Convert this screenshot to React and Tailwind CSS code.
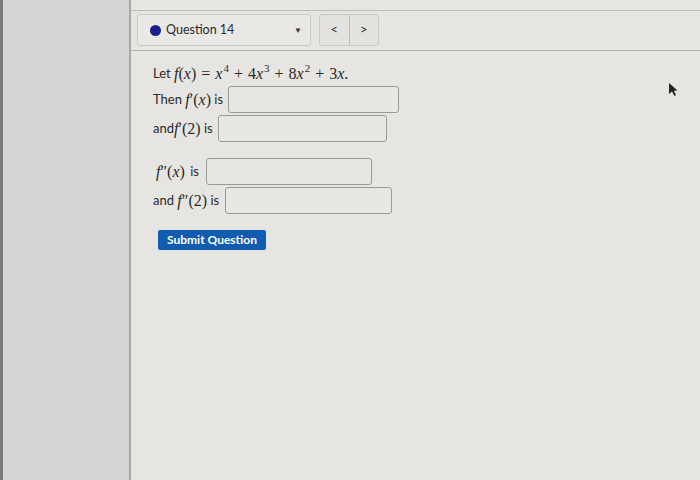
import React from "react";

const SERIF = '"Liberation Serif", "DejaVu Serif", serif';
const M = ({ children }) => (
  <span className="text-[16px] italic" style={{ fontFamily: SERIF, fontStyle: "italic" }}>{children}</span>
);
const R = ({ children }) => (
  <span className="text-[16px]" style={{ fontFamily: SERIF }}>{children}</span>
);
const Op = ({ children }) => (
  <span className="mx-[5px] text-[16px]" style={{ fontFamily: SERIF }}>{children}</span>
);
const Sup = ({ children }) => (
  <span className="relative -top-[6px] ml-[1px] text-[11px]" style={{ fontFamily: SERIF }}>{children}</span>
);

export default function App() {
  return (
    <div className="relative flex h-[480px] w-[700px] overflow-hidden bg-[#e6e5e2] text-[#2d3b45]" style={{ fontFamily: 'Lato, "Open Sans", sans-serif' }}>
      <div className="flex h-full w-[131px] shrink-0">
        <div className="w-[3px] bg-[#7a7a7a]" />
        <div className="flex-1 bg-[#d5d4d5]" />
        <div className="w-[2px] bg-[#a9a9a8]" />
      </div>
      <div className="flex flex-1 flex-col pt-[10px]">
        <div className="border-t border-[#bdbdbb]" />
        <div className="flex items-center gap-2 px-[6px] pt-[3px] pb-[4px]">
          <div className="flex h-[32px] w-[174px] items-center rounded-[3px] border border-[#c9c9c7] bg-[#e9e8e5] pl-[12px] pr-[8px]">
            <span className="mr-[5px] h-[11px] w-[11px] rounded-full bg-[#1a1f8c]" />
            <span className="text-[12.5px] text-[#2a2a2a]">Question 14</span>
            <span className="ml-auto text-[8px] text-[#333]">▼</span>
          </div>
          <div className="flex h-[32px] w-[60px] rounded-[3px] border border-[#c9c9c7] bg-[#e3e2df]">
            <div className="flex flex-1 items-center justify-center border-r border-[#bcbcba] text-[13px] text-[#333]">&lt;</div>
            <div className="flex flex-1 items-center justify-center text-[13px] text-[#333]">&gt;</div>
          </div>
        </div>
        <div className="border-t border-[#b4b4b2]" />
        <div className="flex flex-col pl-[22px] pt-[12px] text-[13px] text-[#2a2a2a]">
          <div className="flex h-[22px] items-center">
            <span>Let&nbsp;</span>
            <M>f</M><R>(</R><M>x</M><R>)</R><Op>=</Op><M>x</M><Sup>4</Sup><Op>+</Op><R>4</R><M>x</M><Sup>3</Sup><Op>+</Op><R>8</R><M>x</M><Sup>2</Sup><Op>+</Op><R>3</R><M>x</M><R>.</R>
          </div>
          <div className="flex h-[29px] items-center">
            <span>Then&nbsp;</span><M>f</M><R>′(</R><M>x</M><R>)</R><span>&nbsp;is&nbsp;</span>
            <div className="ml-[2px] h-[27px] w-[171px] rounded-[3px] border border-[#9a9a98] bg-[#e8e7e4]" />
          </div>
          <div className="flex h-[29px] items-center">
            <span>and</span><M>f</M><R>′(2)</R><span>&nbsp;is&nbsp;</span>
            <div className="ml-[2px] h-[27px] w-[169px] rounded-[3px] border border-[#9a9a98] bg-[#e8e7e4]" />
          </div>
          <div className="h-[14px]" />
          <div className="flex h-[29px] items-center pl-[3px]">
            <M>f</M><R>″(</R><M>x</M><R>)</R><span className="ml-[2px]">&nbsp;is&nbsp;</span>
            <div className="ml-[4px] h-[27px] w-[166px] rounded-[3px] border border-[#9a9a98] bg-[#e8e7e4]" />
          </div>
          <div className="flex h-[29px] items-center">
            <span>and&nbsp;</span><M>f</M><R>″(2)</R><span>&nbsp;is&nbsp;</span>
            <div className="ml-[2px] h-[27px] w-[167px] rounded-[3px] border border-[#9a9a98] bg-[#e8e7e4]" />
          </div>
          <div className="pt-[15px] pl-[5px]">
            <button className="flex h-[20px] items-center rounded-[2px] bg-[#0f5cb0] px-[9px] text-[12px] font-bold text-white">Submit Question</button>
          </div>
        </div>
      </div>
      <svg className="absolute left-[668px] top-[82px]" width="12" height="16" viewBox="0 0 12 16">
        <path d="M1 1 L1 12 L4 9.5 L6.5 14 L8 13 L5.8 8.8 L9.5 8.5 Z" fill="#222" />
      </svg>
    </div>
  );
}
